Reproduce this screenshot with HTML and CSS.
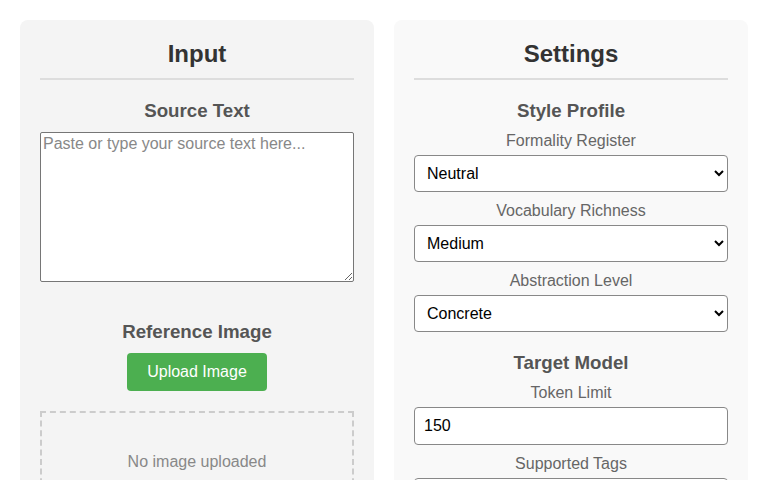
FILE: index.html
```html
<!DOCTYPE html>
<html>
<head>
<meta charset="utf-8">
<link rel="stylesheet" href="styles.css">
</head>
<body>
<div class="container">
  <div class="panel input-panel">
    <h2>Input</h2>
    <div class="section">
      <h3>Source Text</h3>
      <textarea class="source" placeholder="Paste or type your source text here..."></textarea>
    </div>
    <div class="section">
      <h3>Reference Image</h3>
      <button class="upload">Upload Image</button>
      <div class="preview">No image uploaded</div>
    </div>
  </div>
  <div class="panel settings-panel">
    <h2>Settings</h2>
    <div class="section">
      <h3>Style Profile</h3>
      <div class="group">
        <label>Formality Register</label>
        <select><option>Neutral</option></select>
      </div>
      <div class="group">
        <label>Vocabulary Richness</label>
        <select><option>Medium</option></select>
      </div>
      <div class="group">
        <label>Abstraction Level</label>
        <select><option>Concrete</option></select>
      </div>
    </div>
    <div class="section">
      <h3>Target Model</h3>
      <div class="group">
        <label>Token Limit</label>
        <input type="number" value="150">
      </div>
      <div class="group">
        <label>Supported Tags</label>
        <select><option>All</option></select>
      </div>
    </div>
  </div>
</div>
</body>
</html>
```

FILE: styles.css
```css
html, body {
  margin: 0;
  padding: 0;
  background: #fff;
  font-family: "Liberation Sans", Arial, sans-serif;
  color: #333;
}
.container {
  display: flex;
  gap: 20px;
  padding: 20px;
  align-items: flex-start;
}
.panel {
  flex: 1;
  min-width: 0;
  padding: 20px;
  border-radius: 8px;
  text-align: center;
}
.input-panel { background: #f4f4f4; }
.settings-panel { background: #f9f9f9; }
h2 {
  margin: 0 0 20px;
  padding-bottom: 10px;
  border-bottom: 2px solid #ddd;
  font-size: 24px;
  color: #333;
}
h3 {
  margin: 20px 0 10px;
  font-size: 18.72px;
  color: #555;
}
.section { margin-bottom: 20px; }
.source {
  display: block;
  width: 100%;
  height: 150px;
  box-sizing: border-box;
  font-family: "Liberation Sans", Arial, sans-serif;
  font-size: 16px;
  padding: 2px;
  border: 1px solid #767676;
  border-radius: 2px;
  margin-bottom: 39px;
  resize: vertical;
}
.source::placeholder { color: #888; }
.upload {
  background: #4caf50;
  color: #fff;
  border: none;
  border-radius: 4px;
  padding: 10px 20px;
  font-family: "Liberation Sans", Arial, sans-serif;
  font-size: 16px;
  line-height: 18px;
}
.preview {
  margin-top: 20px;
  border: 2px dashed #ccc;
  padding: 40px 10px;
  color: #888;
  font-size: 16px;
  line-height: 18px;
}
.group { margin-bottom: 10px; }
label {
  display: block;
  margin-bottom: 5px;
  color: #666;
  font-size: 16px;
}
select, input {
  display: block;
  width: 100%;
  box-sizing: border-box;
  padding: 8px;
  font-family: "Liberation Sans", Arial, sans-serif;
  font-size: 16px;
  border: 1px solid #888;
  border-radius: 4px;
  background: #fff;
  color: #000;
  height: 37px;
}
input { height: 38px; padding-left: 9px; }
```
